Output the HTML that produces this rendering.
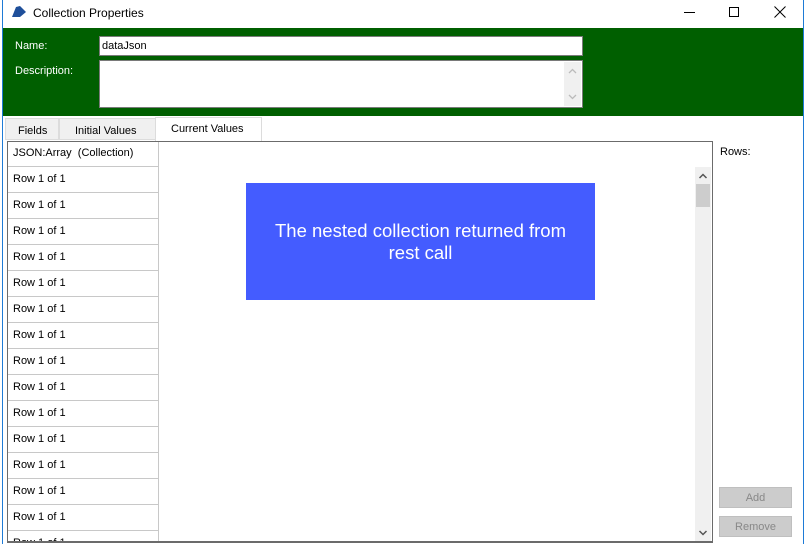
<!DOCTYPE html>
<html><head><style>
*{margin:0;padding:0;box-sizing:border-box}
body{width:807px;height:544px;background:#fff;position:relative;overflow:hidden;font-family:"Liberation Sans",sans-serif;font-size:11px;color:#000}
.a{position:absolute}
.row{position:absolute;left:0;width:151px;height:26px;border-bottom:1px solid #c8c8c8;padding:6px 0 0 5px;font-size:11px}
</style></head><body>
<div class="a" style="left:2px;top:0;width:1px;height:544px;background:#1e7bd6"></div>
<div class="a" style="left:803px;top:0;width:1px;height:544px;background:#1e7bd6"></div>
<svg class="a" style="left:11px;top:5px" width="16" height="14"><path d="M1 12 L5 2 L9 1 L15 7 L9 12 Z" fill="#1f4f9a"/></svg>
<div class="a" style="left:33px;top:6px;font-size:12px">Collection Properties</div>
<div class="a" style="left:684px;top:12px;width:11px;height:1px;background:#000"></div>
<div class="a" style="left:729px;top:7px;width:10px;height:10px;border:1px solid #000"></div>
<svg class="a" style="left:774px;top:6px" width="12" height="12"><path d="M0.5 0.5L11.5 11.5M11.5 0.5L0.5 11.5" stroke="#000" stroke-width="1"/></svg>
<div class="a" style="left:3px;top:28px;width:800px;height:88px;background:#005f00"></div>
<div class="a" style="left:15px;top:40px;color:#fff">Name:</div>
<div class="a" style="left:15px;top:65px;color:#fff">Description:</div>
<div class="a" style="left:99px;top:36px;width:484px;height:20px;background:#fff;border:1px solid #7a7a7a;padding:3px 2px">dataJson</div>
<div class="a" style="left:99px;top:60px;width:484px;height:48px;background:#fff;border:1px solid #7a7a7a"></div>
<div class="a" style="left:564px;top:62px;width:17px;height:44px;background:#f0f0f0"></div>
<svg class="a" style="left:564px;top:62px" width="17" height="44"><path d="M5 11L8.5 7.5L12 11M5 33L8.5 36.5L12 33" stroke="#bbb" stroke-width="1.3" fill="none"/></svg>
<div class="a" style="left:5px;top:118px;width:54px;height:22px;background:#f0f0f0;border:1px solid #dcdcdc;padding:6px 0 0 12px">Fields</div>
<div class="a" style="left:59px;top:118px;width:97px;height:22px;background:#f0f0f0;border:1px solid #dcdcdc;padding:6px 0 0 15px">Initial Values</div>
<div class="a" style="left:155px;top:117px;width:107px;height:25px;background:#fff;border:1px solid #dcdcdc;border-bottom:none;padding:5px 0 0 15px">Current Values</div>
<div class="a" style="left:7px;top:141px;width:706px;height:402px;border:1px solid #6b6b6b;border-bottom:2px solid #6b6b6b;overflow:hidden">
 <div class="a" style="left:150px;top:0;width:1px;height:400px;background:#c8c8c8"></div>
 <div class="row" style="top:0;height:25px;padding-top:5px">JSON:Array&nbsp; (Collection)</div>
 <div class="row" style="top:25px">Row 1 of 1</div><div class="row" style="top:51px">Row 1 of 1</div><div class="row" style="top:77px">Row 1 of 1</div><div class="row" style="top:103px">Row 1 of 1</div><div class="row" style="top:129px">Row 1 of 1</div><div class="row" style="top:155px">Row 1 of 1</div><div class="row" style="top:181px">Row 1 of 1</div><div class="row" style="top:207px">Row 1 of 1</div><div class="row" style="top:233px">Row 1 of 1</div><div class="row" style="top:259px">Row 1 of 1</div><div class="row" style="top:285px">Row 1 of 1</div><div class="row" style="top:311px">Row 1 of 1</div><div class="row" style="top:337px">Row 1 of 1</div><div class="row" style="top:363px">Row 1 of 1</div><div class="row" style="top:389px">Row 1 of 1</div>
 <div class="a" style="left:687px;top:25px;width:16px;height:376px;background:#f0f0f0"></div>
 <div class="a" style="left:688px;top:42px;width:14px;height:23px;background:#cdcdcd"></div>
 <svg class="a" style="left:687px;top:25px" width="16" height="376"><path d="M4.5 11L8 7.5L11.5 11M4.5 364L8 367.5L11.5 364" stroke="#555" stroke-width="1.5" fill="none"/></svg>
</div>
<div class="a" style="left:246px;top:183px;width:349px;height:117px;background:#445cff;color:#fff;font-size:18.5px;text-align:center;padding-top:37px;line-height:22px">The nested collection returned from<br>rest call</div>
<div class="a" style="left:720px;top:146px">Rows:</div>
<div class="a" style="left:719px;top:487px;width:73px;height:21px;background:#cccccc;border:1px solid #bfbfbf;color:#888;text-align:center;padding-top:4px">Add</div>
<div class="a" style="left:719px;top:516px;width:73px;height:21px;background:#cccccc;border:1px solid #bfbfbf;color:#888;text-align:center;padding-top:4px">Remove</div>
</body></html>
